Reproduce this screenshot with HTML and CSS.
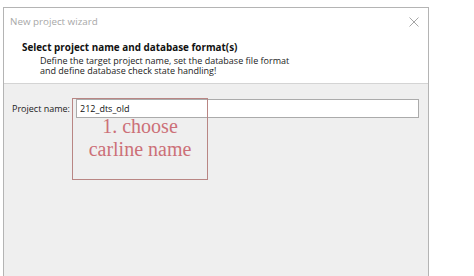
FILE: index.html
```html
<!DOCTYPE html>
<html lang="en">
<head>
    <meta charset="UTF-8">
    <title>New project wizard</title>
    <link rel="stylesheet" href="styles.css">
</head>
<body>
    <div class="window">
        <div class="titlebar">
            <span class="title">New project wizard</span>
            <svg class="close" width="10" height="10" viewBox="0 0 10 10"><path d="M0.5 0.5L9.5 9.5M9.5 0.5L0.5 9.5" stroke="#a6a6a6" stroke-width="1" fill="none"/></svg>
        </div>
        <div class="header">
            <h1>Select project name and database format(s)</h1>
            <p>Define the target project name, set the database file format<br>and define database check state handling!</p>
        </div>
        <div class="content">
            <div class="row">
                <label for="project">Project name:</label>
                <input type="text" id="project" value="212_dts_old">
            </div>
            <!-- annotation drawn over the dialog -->
            <div class="note">1. choose<br>carline name</div>
        </div>
    </div>
</body>
</html>
```

FILE: styles.css
```css
body { margin: 0; background: #fff; font-family: "Open Sans", "DejaVu Sans", sans-serif; font-size: 9px; color: #222; }
.window { margin: 7px 0 0 3px; width: 424px; height: 269px; border: 1px solid #b4b4b4; border-bottom: none; display: flex; flex-direction: column; }
.titlebar { height: 27px; display: flex; align-items: center; justify-content: space-between; padding: 0 9px 0 6px; background: #fff; }
.title { color: #a8a8a8; font-size: 9.8px; }
.header { background: #fff; height: 48px; padding-left: 18px; border-bottom: 1px solid #d4d4d4; }
.header h1 { margin: 6px 0 0; font-size: 9.9px; line-height: 13px; font-weight: bold; color: #111; }
.header p { margin: 2px 0 0 18px; line-height: 10px; font-size: 9px; color: #222; }
.content { flex: 1; background: #efefef; position: relative; padding: 15px 9px 0 8px; }
.row { display: flex; align-items: center; gap: 6px; }
.row label { width: 58px; font-size: 9px; color: #222; }
.row input { flex: 1; height: 19px; box-sizing: border-box; border: 1px solid #ababab; padding: 0 3px; font-family: inherit; font-size: 9px; color: #111; outline: none; }
.note { position: absolute; left: 68px; top: 14px; width: 136px; height: 82px; border: 1.5px solid #b98684; font-family: "Liberation Serif", serif; font-size: 20px; line-height: 23px; color: #cc7078; text-align: center; padding-top: 16px; box-sizing: border-box; }
```
